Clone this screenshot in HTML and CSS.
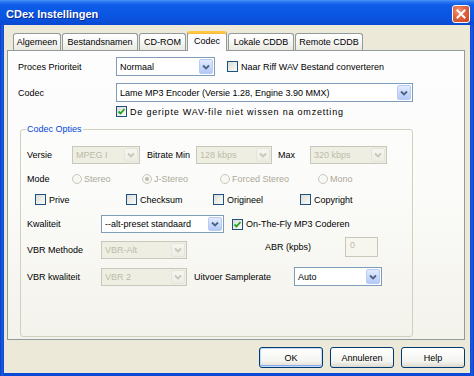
FILE: index.html
```html
<!DOCTYPE html>
<html>
<head>
<meta charset="utf-8">
<link rel="stylesheet" href="styles.css">
</head>
<body>
<div class="window">
  <div class="titlebar">
    <span class="title">CDex Instellingen</span>
    <div class="close"><svg width="10" height="10" viewBox="0 0 10 10"><path d="M1.5 1.5 L8.5 8.5 M8.5 1.5 L1.5 8.5" stroke="#fff" stroke-width="2" stroke-linecap="square"/></svg></div>
  </div>
  <div class="client">
    <div class="tabs">
      <div class="tab t-alg">Algemeen</div>
      <div class="tab t-best">Bestandsnamen</div>
      <div class="tab t-cd">CD-ROM</div>
      <div class="tab active t-codec">Codec</div>
      <div class="tab t-lok">Lokale CDDB</div>
      <div class="tab t-rem">Remote CDDB</div>
    </div>
    <div class="panel">
      <div class="row r1">
        <span class="lbl w98">Proces Prioriteit</span>
        <div class="combo c-prio"><span class="val">Normaal</span><span class="dd"><svg width="8" height="6" viewBox="0 0 8 6"><path d="M1 1.5 L4 4.5 L7 1.5" fill="none" stroke="#4D6185" stroke-width="1.8"/></svg></span></div>
        <div class="check ml12"><span class="cb"></span><span>Naar Riff WAV Bestand converteren</span></div>
      </div>
      <div class="row r2">
        <span class="lbl w98">Codec</span>
        <div class="combo c-codec"><span class="val">Lame MP3 Encoder (Versie 1.28, Engine 3.90 MMX)</span><span class="dd"><svg width="8" height="6" viewBox="0 0 8 6"><path d="M1 1.5 L4 4.5 L7 1.5" fill="none" stroke="#4D6185" stroke-width="1.8"/></svg></span></div>
      </div>
      <div class="row r3">
        <div class="check"><span class="cb on"><svg width="9" height="9" viewBox="0 0 9 9"><path d="M1.5 4.5 L3.5 6.5 L7.5 2" fill="none" stroke="#21A121" stroke-width="1.8"/></svg></span><span class="spread">De geripte WAV-file niet wissen na omzetting</span></div>
      </div>
      <div class="group">
        <span class="legend">Codec Opties</span>
        <div class="grow g-versie">
          <span class="lbl w45">Versie</span>
          <div class="combo dis gc-versie"><span class="val">MPEG I</span><span class="dd"><svg width="8" height="6" viewBox="0 0 8 6"><path d="M1 1.5 L4 4.5 L7 1.5" fill="none" stroke="#C9C7BA" stroke-width="1.8"/></svg></span></div>
          <span class="lbl w49 ml7">Bitrate Min</span>
          <div class="combo dis gc-min"><span class="val">128 kbps</span><span class="dd"><svg width="8" height="6" viewBox="0 0 8 6"><path d="M1 1.5 L4 4.5 L7 1.5" fill="none" stroke="#C9C7BA" stroke-width="1.8"/></svg></span></div>
          <span class="lbl w32 ml6">Max</span>
          <div class="combo dis gc-max"><span class="val">320 kbps</span><span class="dd"><svg width="8" height="6" viewBox="0 0 8 6"><path d="M1 1.5 L4 4.5 L7 1.5" fill="none" stroke="#C9C7BA" stroke-width="1.8"/></svg></span></div>
        </div>
        <div class="grow g-mode">
          <span class="lbl w45">Mode</span>
          <div class="radio-item w70"><span class="rb"></span><span class="dtext">Stereo</span></div>
          <div class="radio-item w78"><span class="rb sel"></span><span class="dtext">J-Stereo</span></div>
          <div class="radio-item w98"><span class="rb"></span><span class="dtext">Forced Stereo</span></div>
          <div class="radio-item"><span class="rb"></span><span class="dtext">Mono</span></div>
        </div>
        <div class="grow g-flags">
          <div class="check w91"><span class="cb"></span><span>Prive</span></div>
          <div class="check w87"><span class="cb"></span><span>Checksum</span></div>
          <div class="check w87"><span class="cb"></span><span>Origineel</span></div>
          <div class="check"><span class="cb"></span><span>Copyright</span></div>
        </div>
        <div class="grow g-kwal">
          <span class="lbl w74">Kwaliteit</span>
          <div class="combo gc-kwal"><span class="val">--alt-preset standaard</span><span class="dd"><svg width="8" height="6" viewBox="0 0 8 6"><path d="M1 1.5 L4 4.5 L7 1.5" fill="none" stroke="#4D6185" stroke-width="1.8"/></svg></span></div>
          <div class="check ml8"><span class="cb on"><svg width="9" height="9" viewBox="0 0 9 9"><path d="M1.5 4.5 L3.5 6.5 L7.5 2" fill="none" stroke="#21A121" stroke-width="1.8"/></svg></span><span>On-The-Fly MP3 Coderen</span></div>
        </div>
        <div class="grow g-vbrm">
          <span class="lbl w74">VBR Methode</span>
          <div class="combo dis gc-small"><span class="val">VBR-Alt</span><span class="dd"><svg width="8" height="6" viewBox="0 0 8 6"><path d="M1 1.5 L4 4.5 L7 1.5" fill="none" stroke="#C9C7BA" stroke-width="1.8"/></svg></span></div>
          <div class="abr">
            <span class="lbl w80">ABR (kpbs)</span>
            <span class="txt">0</span>
          </div>
        </div>
        <div class="grow g-vbrk">
          <span class="lbl w74">VBR kwaliteit</span>
          <div class="combo dis gc-small"><span class="val">VBR 2</span><span class="dd"><svg width="8" height="6" viewBox="0 0 8 6"><path d="M1 1.5 L4 4.5 L7 1.5" fill="none" stroke="#C9C7BA" stroke-width="1.8"/></svg></span></div>
          <span class="lbl w100 ml7">Uitvoer Samplerate</span>
          <div class="combo gc-auto"><span class="val">Auto</span><span class="dd"><svg width="8" height="6" viewBox="0 0 8 6"><path d="M1 1.5 L4 4.5 L7 1.5" fill="none" stroke="#4D6185" stroke-width="1.8"/></svg></span></div>
        </div>
      </div>
    </div>
    <div class="buttons">
      <div class="button default">OK</div>
      <div class="button">Annuleren</div>
      <div class="button">Help</div>
    </div>
  </div>
</div>
</body>
</html>
```
FILE: styles.css
```css
html, body {
  margin: 0;
  padding: 0;
}
body {
  width: 474px;
  height: 376px;
  overflow: hidden;
  font-family: "Liberation Sans", Arial, sans-serif;
  font-size: 9px;
  color: #000;
  background: #0B48D6;
}
.window {
  display: flex;
  flex-direction: column;
  height: 376px;
  background: linear-gradient(to right, #0A3EC4 0, #1A5CE0 2px, #0B48D6 4px, #0B48D6 470px, #1A5CE0 472px, #0A3EC4 474px);
}
.titlebar {
  height: 25px;
  flex: none;
  box-sizing: border-box;
  padding: 3px 4px 0 6px;
  display: flex;
  align-items: center;
  justify-content: space-between;
  background: linear-gradient(#4A95F8 0, #2A74F0 2px, #0D5CE8 5px, #0A58E4 12px, #0A52DE 19px, #0848CF 25px);
}
.title {
  color: #fff;
  font-weight: bold;
  font-size: 11px;
  text-shadow: 1px 1px 0 #0A2A90;
}
.close {
  width: 18px;
  height: 18px;
  box-sizing: border-box;
  border: 1px solid #fff;
  border-radius: 3px;
  background: radial-gradient(circle at 35% 30%, #F0987A 0, #E26744 40%, #C8401E 100%);
  display: flex;
  align-items: center;
  justify-content: center;
}
.client {
  flex: 1;
  margin: 0 4px 3px 4px;
  background: #ECE9D8;
  box-sizing: border-box;
  padding: 6px 5px 0 3px;
  display: flex;
  flex-direction: column;
}
.tabs {
  display: flex;
  align-items: flex-end;
  padding-left: 6px;
}
.tab {
  height: 17px;
  box-sizing: border-box;
  border: 1px solid #919B9C;
  border-bottom: none;
  border-radius: 3px 3px 0 0;
  background: linear-gradient(#FFFFFF, #F7F7F4 50%, #E9E8E1);
  display: flex;
  align-items: center;
  justify-content: center;
  margin-right: 1px;
  white-space: nowrap;
}
.tab.active {
  height: 20px;
  margin-bottom: -1px;
  position: relative;
  z-index: 1;
  background: #FCFCFE;
  border-top: 2px solid #FFC83C;
  box-shadow: inset 0 1px 0 #F7B84A;
  padding-bottom: 2px;
}
.t-alg { width: 48px; }
.t-best { width: 76px; }
.t-cd { width: 47px; }
.t-codec { width: 40px; }
.t-lok { width: 66px; }
.t-rem { width: 68px; }
.panel {
  width: 458px;
  height: 290px;
  box-sizing: border-box;
  border: 1px solid #919B9C;
  background: linear-gradient(#FDFDFE 0, #FBFBF9 50%, #F3F2EB 100%);
  padding: 6px 0 0 10px;
}
.row {
  display: flex;
  align-items: center;
}
.r1 { height: 19px; }
.r2 { height: 19px; margin-top: 7px; }
.r3 { height: 13px; margin-top: 3px; padding-left: 98px; }
.lbl { white-space: nowrap; flex: none; }
.w45 { width: 45px; }
.w49 { width: 49px; }
.w32 { width: 32px; }
.w70 { width: 70px; }
.w74 { width: 74px; }
.w78 { width: 78px; }
.w80 { width: 80px; }
.w87 { width: 87px; }
.w91 { width: 91px; }
.w98 { width: 98px; }
.w100 { width: 100px; }
.ml6 { margin-left: 6px; }
.ml7 { margin-left: 7px; }
.ml8 { margin-left: 8px; }
.ml12 { margin-left: 12px; }
.combo {
  display: flex;
  align-items: stretch;
  box-sizing: border-box;
  border: 1px solid #7F9DB9;
  background: #fff;
  height: 18px;
  flex: none;
}
.combo .val {
  flex: 1;
  padding-left: 3px;
  white-space: nowrap;
  overflow: hidden;
  display: flex;
  align-items: center;
}
.combo .dd {
  width: 14px;
  margin: 1px;
  box-sizing: border-box;
  border: 1px solid #B7CBF5;
  border-radius: 2px;
  background: linear-gradient(#E3ECFE, #C6D7FB 60%, #B4C9F6);
  display: flex;
  align-items: center;
  justify-content: center;
}
.combo.dis {
  border-color: #C9C7BA;
  background: #EEEEE3;
  color: #BDBCA8;
}
.combo.dis .dd {
  border-color: #E6E5DC;
  background: linear-gradient(#F6F6F1, #EDEDE5);
}
.c-prio { width: 99px; height: 19px; }
.c-codec { width: 297px; height: 19px; }
.gc-versie { width: 68px; }
.gc-min { width: 76px; }
.gc-max { width: 77px; }
.gc-kwal { width: 123px; }
.gc-small { width: 86px; }
.gc-auto { width: 88px; height: 19px; }
.check {
  display: flex;
  align-items: center;
  white-space: nowrap;
  flex: none;
}
.cb {
  width: 11px;
  height: 11px;
  box-sizing: border-box;
  border: 1px solid #1C5180;
  background: linear-gradient(135deg, #DCDCD6, #FBFBF9);
  margin-right: 3px;
  display: flex;
  align-items: center;
  justify-content: center;
  flex: none;
}
.spread { letter-spacing: 0.8px; }
.group {
  position: relative;
  margin: 11px 0 0 2px;
  width: 393px;
  height: 208px;
  box-sizing: border-box;
  border: 1px solid #D0D0BF;
  border-radius: 3px;
  padding: 15px 0 0 6px;
}
.legend {
  position: absolute;
  left: 5px;
  top: -6px;
  padding: 0 1px;
  background: #FDFDFE;
  color: #0046D5;
  line-height: 11px;
}
.grow {
  display: flex;
  align-items: center;
}
.g-versie { height: 19px; }
.g-mode { height: 12px; margin-top: 9px; }
.g-flags { height: 11px; margin-top: 9px; padding-left: 8px; }
.g-kwal { height: 18px; margin-top: 10px; }
.g-vbrm { height: 18px; margin-top: 8px; }
.g-vbrk { height: 19px; margin-top: 8px; }
.radio-item {
  display: flex;
  align-items: center;
  white-space: nowrap;
  flex: none;
}
.rb {
  width: 10px;
  height: 10px;
  box-sizing: border-box;
  border: 1px solid #CAC8BB;
  border-radius: 50%;
  background: #F7F7F3;
  margin-right: 2px;
  display: flex;
  align-items: center;
  justify-content: center;
}
.rb.sel::after {
  content: "";
  width: 4px;
  height: 4px;
  border-radius: 50%;
  background: #BEBCAE;
}
.dtext { color: #ACA899; }
.abr {
  display: flex;
  align-items: center;
  margin-left: 78px;
  margin-bottom: 6px;
}
.txt {
  width: 33px;
  height: 20px;
  box-sizing: border-box;
  border: 1px solid #C9C7BA;
  background: #F6F5EE;
  color: #BDBCA8;
  padding: 2px 0 0 4px;
}
.buttons {
  display: flex;
  justify-content: flex-end;
  gap: 7px;
  margin-top: 7px;
}
.button {
  width: 64px;
  height: 21px;
  box-sizing: border-box;
  border: 1px solid #003C74;
  border-radius: 3px;
  background: linear-gradient(#FFFFFF, #F4F4F0 70%, #DCD8CC);
  display: flex;
  align-items: center;
  justify-content: center;
}
.button.default {
  box-shadow: inset 0 0 0 1px #C4D8F8, inset 0 -1px 0 1px #8AAAEC;
}
```
